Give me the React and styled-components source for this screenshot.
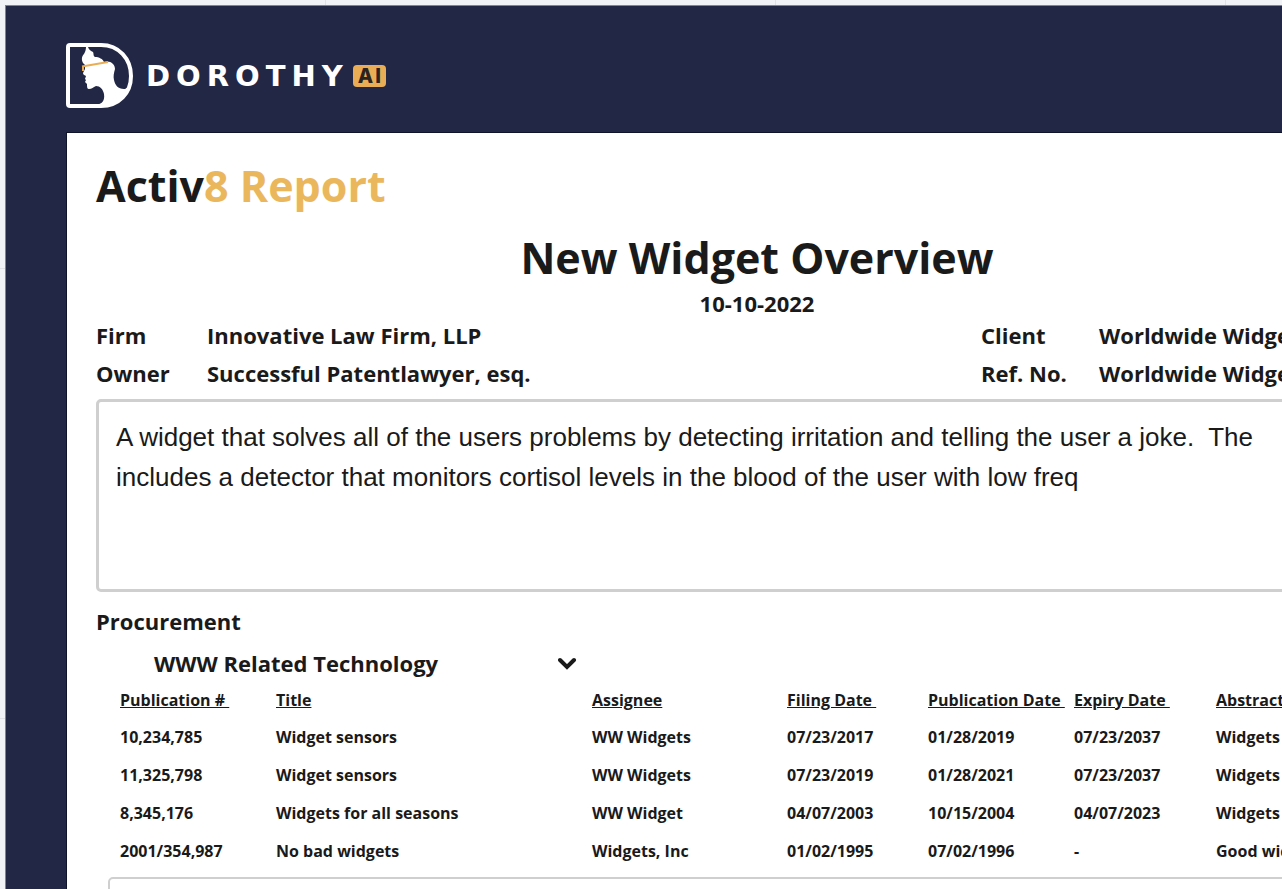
import React, { useState } from "react";
import styled, { createGlobalStyle } from "styled-components";

const GlobalStyle = createGlobalStyle`
  * { box-sizing: border-box; }
  body {
    margin: 0;
    overflow-x: hidden;
    color: #1a1a1a;
    background-color: #f1f2f5;
    background-image:
      linear-gradient(90deg, #e0e1e5 1px, transparent 1px),
      linear-gradient(#e0e1e5 1px, transparent 1px);
    background-size: 450px 450px;
    background-position: 325px 268px;
    font-family: "Open Sans", "Noto Sans", sans-serif;
    font-weight: 700;
  }
`;

const Viewport = styled.div`
  padding: 5px 0 0 5px;
  overflow: hidden;
  height: 100vh;
`;

const Frame = styled.div`
  min-width: 1442px;
  min-height: 100%;
  padding-left: 60px;
  border: 1px solid #7e8497;
  background: #222745;
`;

const Header = styled.header`
  display: flex;
  align-items: center;
  height: 126px;
  padding-top: 14px;
`;

const Brand = styled.a`
  display: flex;
  align-items: center;
  color: #fff;
  text-decoration: none;
`;

const Wordmark = styled.span`
  margin-left: 12px;
  font: 700 29px/32px "DejaVu Sans", sans-serif;
  letter-spacing: 6px;
`;

const AiTag = styled.span`
  margin-left: 4px;
  padding: 0 3px 0 5px;
  border-radius: 4px;
  background: #e9ae55;
  color: #2b2320;
  font: 800 20px/22px Inter, sans-serif;
  letter-spacing: 2px;
`;

const Sheet = styled.main`
  padding: 23px 28px 40px 29px;
  border: solid #10142a;
  border-width: 1px 0 0 1px;
  background: #fff;
`;

const ReportName = styled.div`
  font-size: 43px;
  line-height: 60px;
`;

const Accent = styled.span`
  color: #ebb75c;
`;

const Title = styled.h1`
  margin: 10px 0 0;
  font-size: 43px;
  line-height: 64px;
  text-align: center;
`;

const ReportDate = styled.div`
  font-size: 22px;
  line-height: 26px;
  text-align: center;
`;

const Details = styled.dl`
  display: grid;
  grid-template-columns: 111px 1fr 118px 319px;
  margin: 0 0 7px;
  font-size: 22px;
  line-height: 38px;
`;

const Term = styled.dt``;

const Value = styled.dd`
  margin: 0;
`;

const NoteBox = styled.textarea`
  display: block;
  width: 100%;
  height: ${(p) => p.$height};
  margin: 0;
  padding: 15px 17px;
  border: ${(p) => p.$line} solid #cfcfcf;
  border-radius: 5px;
  outline: 0;
  resize: none;
  background: #fff;
  color: #1a1a1a;
  font: 26px/40px "Liberation Sans", Arial, sans-serif;
`;

const SectionTitle = styled.h2`
  margin: 10px 0 5px;
  font-size: 22px;
  line-height: 38px;
`;

const GroupToggle = styled.button`
  display: flex;
  align-items: center;
  justify-content: space-between;
  width: 424px;
  margin-left: 58px;
  padding: 0;
  border: 0;
  background: none;
  color: inherit;
  font: inherit;
  font-size: 22px;
  line-height: 36px;
  cursor: pointer;
`;

const Patents = styled.table`
  width: 100%;
  margin-left: 24px;
  border-collapse: collapse;
  table-layout: fixed;
  font-size: 16px;
  line-height: 22px;
`;

const Col = styled.col`
  width: ${(p) => p.$width};
`;

const HeadCell = styled.th`
  height: 37px;
  padding: 0;
  text-align: left;
  text-decoration: underline;
  white-space: pre;
`;

const Cell = styled.td`
  height: 38px;
  padding: 0;
  white-space: nowrap;
`;

const GroupNote = styled.div`
  padding: 7px 12px 0;
`;

const columns = [
  ["Publication # ", "156px"],
  ["Title", "316px"],
  ["Assignee", "195px"],
  ["Filing Date ", "141px"],
  ["Publication Date ", "146px"],
  ["Expiry Date ", "142px"],
  ["Abstract", "auto"],
];

const patents = [
  ["10,234,785", "Widget sensors", "WW Widgets", "07/23/2017", "01/28/2019", "07/23/2037", "Widgets"],
  ["11,325,798", "Widget sensors", "WW Widgets", "07/23/2019", "01/28/2021", "07/23/2037", "Widgets"],
  ["8,345,176", "Widgets for all seasons", "WW Widget", "04/07/2003", "10/15/2004", "04/07/2023", "Widgets"],
  ["2001/354,987", "No bad widgets", "Widgets, Inc", "01/02/1995", "07/02/1996", "-", "Good widgets"],
];

const summary =
  "A widget that solves all of the users problems by detecting irritation and telling the user a joke.  The\nincludes a detector that monitors cortisol levels in the blood of the user with low freq";

function LogoMark() {
  return (
    <svg width="68" height="66" viewBox="0 0 68 66" aria-hidden="true">
      <path
        d="M4 2H35C53 2 65 16 65 33S53 63 35 63H4Q2 63 2 61V4Q2 2 4 2Z"
        fill="none"
        stroke="#fff"
        strokeWidth="4"
        strokeLinejoin="round"
      />
      <path
        d="M22 4C23 7 25 8 27 9C28 11 27 13 29 14C33 14 37 16 38 19C44 17 49 21 49 26C48 30 47 33 48 37C49 42 52 46 58 46C61 46 62 44 64 39C62 53 52 64 36 64L30 62C36 61 39 58 38 51C37 46 34 43 30 43C27 44 26 46 23 46C21 46 21 44 21 41L19 39L20 37L19 36L20 33C19 32 17 32 17 30L19 26V22L17 20C15 16 16 13 18 11C19 9 20 7 20 4Z"
        fill="#fff"
      />
      <path d="M16 23.500L42 19M17 23V28" fill="none" stroke="#e9ae55" strokeWidth="2" />
    </svg>
  );
}

function Chevron() {
  return (
    <svg width="20" height="14" viewBox="0 0 20 14" aria-hidden="true">
      <path d="M2 4L9 11L16 4" fill="none" stroke="#1a1a1a" strokeWidth="4" strokeLinecap="round" />
    </svg>
  );
}

export default function App() {
  const [open, setOpen] = useState(true);
  return (
    <>
      <GlobalStyle />
      <Viewport>
        <Frame>
          <Header>
            <Brand href="#">
              <LogoMark />
              <Wordmark>DOROTHY</Wordmark>
              <AiTag>AI</AiTag>
            </Brand>
          </Header>
          <Sheet>
            <ReportName>
              Activ<Accent>8 Report</Accent>
            </ReportName>
            <Title>New Widget Overview</Title>
            <ReportDate>10-10-2022</ReportDate>
            <Details>
              <Term>Firm</Term>
              <Value>Innovative Law Firm, LLP</Value>
              <Term>Client</Term>
              <Value>Worldwide Widgets</Value>
              <Term>Owner</Term>
              <Value>Successful Patentlawyer, esq.</Value>
              <Term>Ref. No.</Term>
              <Value>Worldwide Widgets</Value>
            </Details>
            <NoteBox aria-label="Summary" $height="193px" $line="3px" defaultValue={summary} spellCheck={false} />
            <SectionTitle>Procurement</SectionTitle>
            <GroupToggle type="button" aria-expanded={open} onClick={() => setOpen(!open)}>
              WWW Related Technology
              <Chevron />
            </GroupToggle>
            {open && (
              <>
                <Patents>
                  <colgroup>
                    {columns.map(([name, width]) => (
                      <Col key={name} $width={width} />
                    ))}
                  </colgroup>
                  <thead>
                    <tr>
                      {columns.map(([name]) => (
                        <HeadCell key={name} scope="col">{name}</HeadCell>
                      ))}
                    </tr>
                  </thead>
                  <tbody>
                    {patents.map((row) => (
                      <tr key={row[0]}>
                        {row.map((text, i) => (
                          <Cell key={i}>{text}</Cell>
                        ))}
                      </tr>
                    ))}
                  </tbody>
                </Patents>
                <GroupNote>
                  <NoteBox aria-label="Group notes" $height="120px" $line="2px" />
                </GroupNote>
              </>
            )}
          </Sheet>
        </Frame>
      </Viewport>
    </>
  );
}
